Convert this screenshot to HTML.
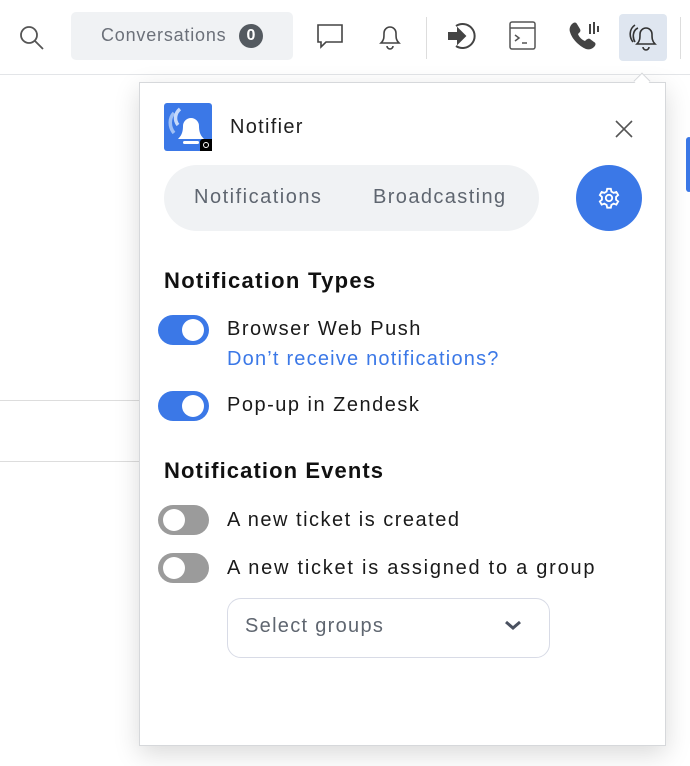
<!DOCTYPE html><html><head><meta charset="utf-8"><style>
*{box-sizing:border-box;margin:0;padding:0}
body{width:690px;height:766px;background:#fff;font-family:"Liberation Sans",sans-serif;position:relative;overflow:hidden;color:#1f1f1f}
.a{position:absolute}
.tog{position:absolute;left:158px;width:51px;height:30px;border-radius:15px}
.tog::after{content:"";position:absolute;top:4px;width:22px;height:22px;border-radius:50%;background:#fff}
.on{background:#3b78e7}.on::after{right:5px}
.off{background:#9b9b9b}.off::after{left:5px}
.lbl{position:absolute;left:227px;font-size:20px;color:#1a1a1a;letter-spacing:1.5px}
</style></head><body>
<div class="a" style="left:0;top:74px;width:690px;height:1px;background:#e3e5e8"></div>
<svg class="a" style="left:18px;top:24px" width="28" height="28" viewBox="0 0 28 28" fill="none" stroke="#555" stroke-width="1.8"><circle cx="11" cy="11" r="8"/><path d="M17 17l8 8"/></svg>
<div class="a" style="left:71px;top:12px;width:222px;height:48px;background:#f0f2f4;border-radius:5px"></div>
<div class="a" style="left:101px;top:25px;font-size:18px;color:#6b7079;letter-spacing:.8px">Conversations</div>
<div class="a" style="left:239px;top:24px;width:24px;height:24px;border-radius:50%;background:#545a60;color:#fff;font-size:16px;font-weight:bold;text-align:center;line-height:24px">0</div>
<svg class="a" style="left:316px;top:22px" width="28" height="28" viewBox="0 0 28 28" fill="none" stroke="#444" stroke-width="1.6"><path d="M2 3h24v17H10l-5 5v-5H2z"/></svg>
<svg class="a" style="left:376px;top:21px" width="28" height="30" viewBox="0 0 28 30" fill="none" stroke="#444" stroke-width="1.6"><path d="M5 22c3-3 3-5 3-10a6 6 0 0112 0c0 5 0 7 3 10z M11 25a3 3 0 006 0"/></svg>
<div class="a" style="left:426px;top:17px;width:1px;height:42px;background:#ddd"></div>
<svg class="a" style="left:446px;top:20px" width="32" height="32" viewBox="0 0 32 32" fill="none" stroke="#444" stroke-width="2"><path d="M10 6a12 12 0 110 20"/><path d="M3 13h9V9l7 7-7 7v-4H3z" fill="#444"/></svg>
<svg class="a" style="left:509px;top:21px" width="28" height="30" viewBox="0 0 28 30" fill="none" stroke="#555" stroke-width="1.5"><rect x="1" y="1" width="25" height="27" rx="2"/><path d="M1 7h25M6 14l4 3-4 3M13 22h5"/></svg>
<svg class="a" style="left:568px;top:20px" width="34" height="32" viewBox="0 0 34 32" fill="#444"><path d="M4 4c2-2 4-2 5 0l3 5c1 2 0 3-1 4l-1 1c1 3 4 6 7 7l1-1c1-1 3-2 4-1l4 3c2 1 2 3 0 5-2 2-5 3-8 2C11 26 4 19 2 12 1 9 2 6 4 4z"/><rect x="21" y="4" width="2" height="10"/><rect x="25" y="2" width="2" height="12"/><rect x="29" y="6" width="2" height="6"/></svg>
<div class="a" style="left:619px;top:14px;width:48px;height:47px;background:#dfe6f0;border-radius:4px"></div>
<svg class="a" style="left:628px;top:20px" width="32" height="34" viewBox="0 0 32 34" fill="none" stroke="#333" stroke-width="1.6"><path d="M9 24c3-3 3-6 3-10a6 6 0 0112 0c0 4 0 7 3 10z M15 27a3 3 0 006 0 M10 8c-5 2-6 9-3 14 M7 5c-6 4-6 12-2 17"/></svg>
<div class="a" style="left:680px;top:17px;width:1px;height:42px;background:#ddd"></div>
<div class="a" style="left:0;top:400px;width:140px;height:1px;background:#ddd"></div>
<div class="a" style="left:0;top:461px;width:140px;height:1px;background:#ddd"></div>
<div class="a" style="left:686px;top:137px;width:6px;height:55px;background:#3b78e7;border-radius:3px"></div>
<div class="a" style="left:139px;top:82px;width:527px;height:664px;background:#fff;border:1px solid #d6d8db;box-shadow:0 8px 24px rgba(0,0,0,.15)"></div>
<div class="a" style="left:636px;top:75px;width:12px;height:12px;background:#fff;border-left:1px solid #d6d8db;border-top:1px solid #d6d8db;transform:rotate(45deg)"></div>
<div class="a" style="left:164px;top:103px;width:48px;height:48px;background:#3b78e7;border-radius:3px;overflow:hidden">
<svg width="48" height="48" viewBox="0 0 48 48"><path d="M10 10c-5 5-5 14 0 20" stroke="#9fc0f5" stroke-width="3.5" fill="none"/><path d="M16 6c-5 4-6 11-2 16" stroke="#c7dafa" stroke-width="3.5" fill="none"/><path d="M14 36c3-3 5-6 5-13a8 8 0 0116 0c0 7 2 10 5 13z" fill="#fff"/><rect x="19" y="38" width="16" height="3" rx="1.5" fill="#fff"/></svg></div>
<div class="a" style="left:200px;top:139px;width:12px;height:12px;background:#000;border-radius:3px 0 0 0"><div style="margin:3px;width:6px;height:6px;border:1.5px solid #fff;border-radius:50%"></div></div>
<div class="a" style="left:230px;top:116px;font-size:20px;color:#1f1f1f;letter-spacing:1.3px">Notifier</div>
<svg class="a" style="left:614px;top:119px" width="20" height="20" viewBox="0 0 20 20" stroke="#555" stroke-width="1.6"><path d="M2 2l16 16M18 2L2 18"/></svg>
<div class="a" style="left:164px;top:165px;width:375px;height:66px;background:#f0f2f4;border-radius:33px"></div>
<div class="a" style="left:194px;top:186px;font-size:20px;color:#5f6670;letter-spacing:1.5px">Notifications</div>
<div class="a" style="left:373px;top:186px;font-size:20px;color:#5f6670;letter-spacing:1.4px">Broadcasting</div>
<div class="a" style="left:576px;top:165px;width:66px;height:66px;border-radius:50%;background:#3b78e7"></div>
<svg class="a" style="left:598px;top:187px" width="22" height="22" viewBox="0 0 24 24" fill="none" stroke="#fff" stroke-width="2"><circle cx="12" cy="12" r="3.5"/><path d="M10 2h4l.6 3 2.5 1.4 2.9-1 2 3.4-2.3 2v3l2.3 2-2 3.4-2.9-1-2.5 1.4-.6 3h-4l-.6-3-2.5-1.4-2.9 1-2-3.4 2.3-2v-3l-2.3-2 2-3.4 2.9 1L9.4 5z"/></svg>
<div class="a" style="left:164px;top:268px;font-size:22px;font-weight:bold;color:#111;letter-spacing:1.3px">Notification Types</div>
<div class="tog on" style="top:315px"></div>
<div class="lbl" style="top:318px">Browser Web Push</div>
<div class="a" style="left:227px;top:348px;font-size:20px;color:#3b78e7;letter-spacing:1.2px">Don’t receive notifications?</div>
<div class="tog on" style="top:391px"></div>
<div class="lbl" style="top:394px">Pop-up in Zendesk</div>
<div class="a" style="left:164px;top:458px;font-size:22px;font-weight:bold;color:#111;letter-spacing:1.1px">Notification Events</div>
<div class="tog off" style="top:505px"></div>
<div class="lbl" style="top:509px">A new ticket is created</div>
<div class="tog off" style="top:553px"></div>
<div class="lbl" style="top:557px;letter-spacing:1.75px">A new ticket is assigned to a group</div>
<div class="a" style="left:227px;top:598px;width:323px;height:60px;border:1.5px solid #d8dbe6;border-radius:14px"></div>
<div class="a" style="left:245px;top:615px;font-size:20px;color:#5f6670;letter-spacing:1.3px">Select groups</div>
<svg class="a" style="left:503px;top:619px" width="20" height="12" viewBox="0 0 20 12" fill="none" stroke="#4a5160" stroke-width="3"><path d="M3 3l7 6 7-6"/></svg>
</body></html>
